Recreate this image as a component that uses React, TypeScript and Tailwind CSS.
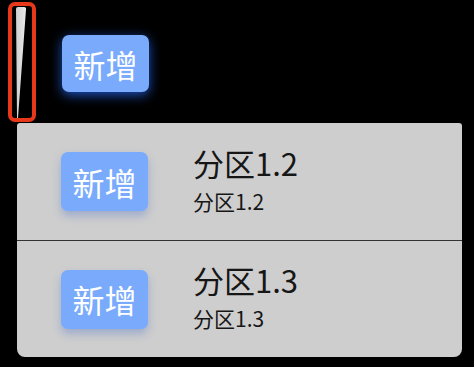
import React from "react";

const font = { fontFamily: '"Noto Sans CJK SC", "Noto Sans", sans-serif' };

function AddButton({ glow }: { glow?: boolean }) {
  return (
    <div
      className={
        "flex items-center justify-center w-[87px] rounded-[7px] bg-[#79aafc] text-white text-[32px] leading-none " +
        (glow
          ? "h-[57px] shadow-[0_3px_12px_rgba(40,110,255,0.75)]"
          : "h-[59px] shadow-[0_5px_9px_rgba(70,110,200,0.35)]")
      }
    >
      新增
    </div>
  );
}

function Row({ label, last }: { label: string; last?: boolean }) {
  return (
    <div
      className={
        "flex items-center pl-[44px] " +
        (last ? "h-[116px]" : "h-[118px] border-b border-[#333333]")
      }
    >
      <AddButton />
      <div className="ml-[45px] mb-[6px] flex flex-col text-[#161616]">
        <div className="text-[31px] leading-[38px]">{label}</div>
        <div className="text-[21px] leading-[26px] mt-[6px]">{label}</div>
      </div>
    </div>
  );
}

export default function App() {
  return (
    <div className="w-[474px] h-[367px] bg-black overflow-hidden" style={font}>
      <div className="flex items-start h-[123px]">
        <div className="ml-2 mt-[2px] w-[28px] h-[120px] border-4 border-[#e8381a] rounded-[7px]">
          <svg width="20" height="112" viewBox="0 0 20 112">
            <defs>
              <linearGradient id="g" x1="0" y1="0" x2="1" y2="0">
                <stop offset="0" stopColor="#cfcfcf" />
                <stop offset="1" stopColor="#ececec" />
              </linearGradient>
            </defs>
            <path d="M4 3 Q4 1 6 1 L12 1 Q14.5 1 14 3.5 L6 112 L5 112 Z" fill="url(#g)" />
          </svg>
        </div>
        <div className="ml-[26px] mt-[35px]">
          <AddButton glow />
        </div>
      </div>
      <div className="ml-[17px] w-[445px] bg-[#cecece] rounded-t-[3px] rounded-b-[8px]">
        <Row label="分区1.2" />
        <Row label="分区1.3" last />
      </div>
    </div>
  );
}
